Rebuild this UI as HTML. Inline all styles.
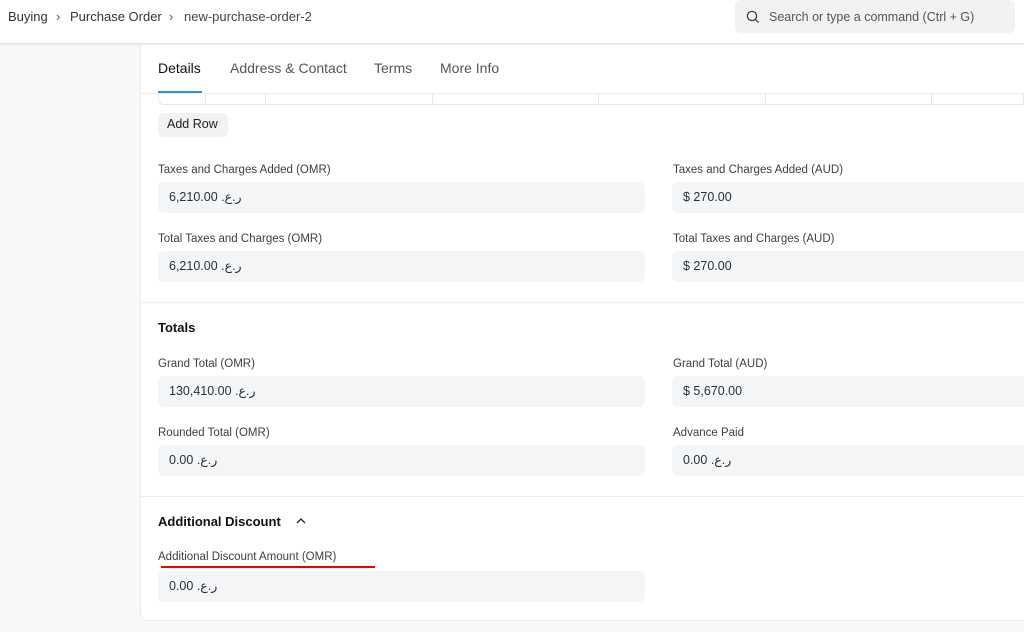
<!DOCTYPE html>
<html><head><meta charset="utf-8">
<style>
*{margin:0;padding:0;box-sizing:border-box}
body{width:1024px;height:632px;overflow:hidden;background:#f8f8f8;font-family:"Liberation Sans","Noto Sans CJK SC",sans-serif;color:#1f272e;position:relative}
.a{position:absolute}
.hdr{left:0;top:0;width:1024px;height:44px;background:#fff;border-bottom:1px solid #e2e2e2;box-shadow:0 1px 2px rgba(0,0,0,.06)}
.bc{top:9px;font-size:13px;color:#333}
.card{left:140px;top:45px;width:900px;height:576px;background:#fff;border:1px solid #ebebeb;border-radius:8px;border-top:none;border-top-left-radius:0}
.lbl{font-size:11.5px;color:#3a3f44}
.inp{height:31px;background:#f4f5f6;border-radius:6px;font-size:12.5px;color:#2b3035;padding:7px 11px;line-height:17px}
.h{font-size:13px;font-weight:bold;color:#111}
.sep{left:141px;width:883px;height:1px;background:#ededed}
</style></head><body>
<div class="a hdr"></div>
<div class="a bc" style="left:8px">Buying</div>
<div class="a bc" style="left:56px;color:#555">›</div>
<div class="a bc" style="left:70px">Purchase Order</div>
<div class="a bc" style="left:169px;color:#555">›</div>
<div class="a bc" style="left:184px;color:#444">new-purchase-order-2</div>
<div class="a" style="left:735px;top:0;width:280px;height:33px;background:#f1f2f3;border-radius:6px"></div>
<svg class="a" style="left:746px;top:10px" width="14" height="14" viewBox="0 0 14 14"><circle cx="6" cy="6" r="4.6" fill="none" stroke="#444" stroke-width="1.3"/><path d="M9.3 9.3L12.5 12.5" stroke="#444" stroke-width="1.3"/></svg>
<div class="a" style="left:769px;top:10px;font-size:12.5px;color:#555">Search or type a command (Ctrl + G)</div>

<div class="a card"></div>
<div class="a" style="left:158px;top:60px;font-size:14px;color:#111">Details</div>
<div class="a" style="left:158px;top:91px;width:44px;height:2px;background:#2490ef"></div>
<div class="a" style="left:230px;top:60px;font-size:14px;color:#555">Address &amp; Contact</div>
<div class="a" style="left:374px;top:60px;font-size:14px;color:#555">Terms</div>
<div class="a" style="left:440px;top:60px;font-size:14px;color:#555">More Info</div>
<div class="a" style="left:141px;top:93px;width:883px;height:1px;background:#ececec"></div>
<div class="a" style="left:158px;top:93px;width:866px;height:12px;border:1px solid #e8e8e8;border-top:none;border-bottom-left-radius:6px"></div>
<div class="a" style="left:205px;top:93px;width:1px;height:12px;background:#e8e8e8"></div>
<div class="a" style="left:265px;top:93px;width:1px;height:12px;background:#e8e8e8"></div>
<div class="a" style="left:432px;top:93px;width:1px;height:12px;background:#e8e8e8"></div>
<div class="a" style="left:598px;top:93px;width:1px;height:12px;background:#e8e8e8"></div>
<div class="a" style="left:765px;top:93px;width:1px;height:12px;background:#e8e8e8"></div>
<div class="a" style="left:931px;top:93px;width:1px;height:12px;background:#e8e8e8"></div>
<div class="a" style="left:158px;top:113px;width:70px;height:24px;background:#f1f2f3;border-radius:6px;font-size:12.5px;padding:4px 9px;color:#222">Add Row</div>

<div class="a lbl" style="left:158px;top:164px">Taxes and Charges Added (OMR)</div>
<div class="a inp" style="left:158px;top:182px;width:487px">6,210.00 <bdi dir="rtl">ر.ع.</bdi></div>
<div class="a lbl" style="left:673px;top:164px">Taxes and Charges Added (AUD)</div>
<div class="a inp" style="left:672px;top:182px;width:360px">$ 270.00</div>
<div class="a lbl" style="left:158px;top:233px">Total Taxes and Charges (OMR)</div>
<div class="a inp" style="left:158px;top:251px;width:487px">6,210.00 <bdi dir="rtl">ر.ع.</bdi></div>
<div class="a lbl" style="left:673px;top:233px">Total Taxes and Charges (AUD)</div>
<div class="a inp" style="left:672px;top:251px;width:360px">$ 270.00</div>

<div class="a sep" style="top:302px"></div>
<div class="a h" style="left:158px;top:320px">Totals</div>
<div class="a lbl" style="left:158px;top:358px">Grand Total (OMR)</div>
<div class="a inp" style="left:158px;top:376px;width:487px">130,410.00 <bdi dir="rtl">ر.ع.</bdi></div>
<div class="a lbl" style="left:673px;top:358px">Grand Total (AUD)</div>
<div class="a inp" style="left:672px;top:376px;width:360px">$ 5,670.00</div>
<div class="a lbl" style="left:158px;top:427px">Rounded Total (OMR)</div>
<div class="a inp" style="left:158px;top:445px;width:487px">0.00 <bdi dir="rtl">ر.ع.</bdi></div>
<div class="a lbl" style="left:673px;top:427px">Advance Paid</div>
<div class="a inp" style="left:672px;top:445px;width:360px">0.00 <bdi dir="rtl">ر.ع.</bdi></div>

<div class="a sep" style="top:496px"></div>
<div class="a h" style="left:158px;top:514px">Additional Discount</div>
<svg class="a" style="left:295px;top:516px" width="12" height="10" viewBox="0 0 12 10"><path d="M2 7L6 3L10 7" fill="none" stroke="#222" stroke-width="1.3"/></svg>
<div class="a lbl" style="left:158px;top:551px">Additional Discount Amount (OMR)</div>
<div class="a" style="left:161px;top:566px;width:214px;height:2px;background:#e00"></div>
<div class="a inp" style="left:158px;top:571px;width:487px">0.00 <bdi dir="rtl">ر.ع.</bdi></div>
</body></html>
